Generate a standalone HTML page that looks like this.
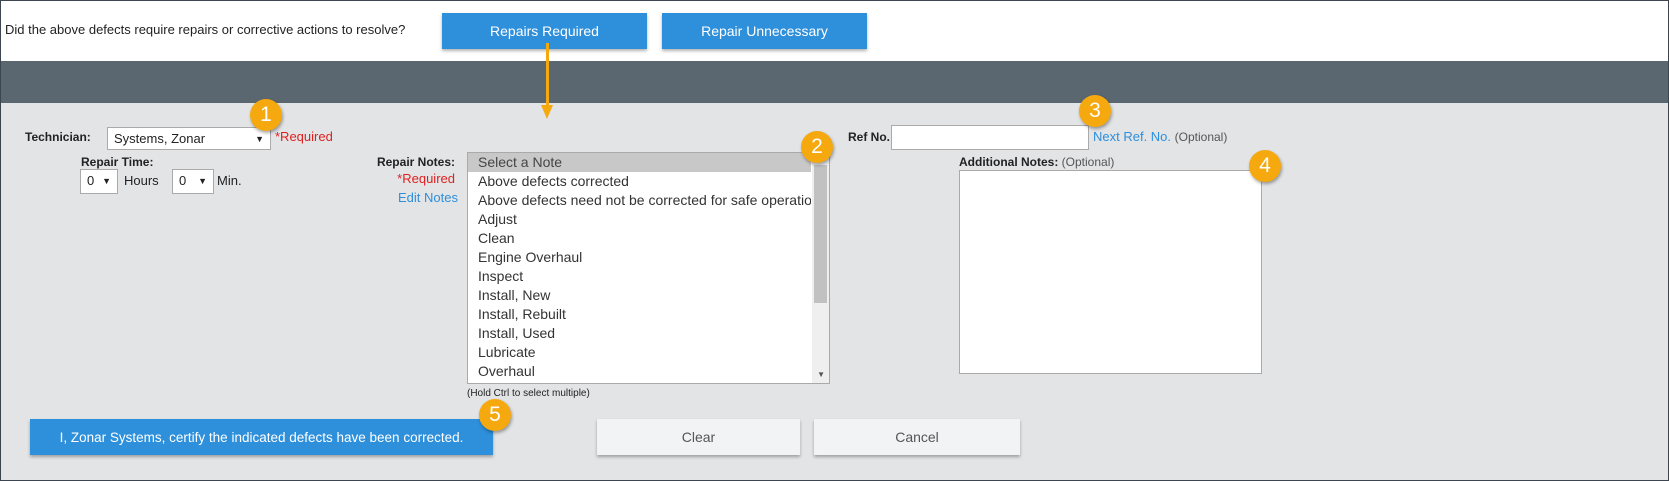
<!DOCTYPE html>
<html><head><style>
*{box-sizing:border-box;margin:0;padding:0}
body{width:1669px;height:481px;position:relative;overflow:hidden;font-family:"Liberation Sans",sans-serif;color:#222;background:#fff}
.a{position:absolute;white-space:nowrap}
.btn{position:absolute;display:flex;align-items:center;justify-content:center;font-size:14px;box-shadow:0 2px 3px rgba(0,0,0,.3)}
.blue{background:#2e8fdb;color:#fff}
.gray{background:#f2f3f5;color:#555}
.badge{position:absolute;width:32px;height:32px;border-radius:50%;background:#f5a90f;color:#fff;font-size:21px;display:flex;align-items:center;justify-content:center;box-shadow:1px 2px 3px rgba(0,0,0,.35)}
.b{font-weight:bold;font-size:12px}
.sel{position:absolute;background:#fff;border:1px solid #aaa;font-size:13px;padding-left:6px;line-height:22px}
.sel:after{content:"▼";position:absolute;right:6px;top:0;font-size:9px}
.li{height:19px;line-height:19px;padding-left:10px;font-size:14px;color:#333}
</style></head><body>
<div class="a" style="left:0;top:0;width:1669px;height:481px;border:1px solid #3d4650;"></div>
<div class="a" style="left:1px;top:61px;width:1667px;height:42px;background:#5a6670"></div>
<div class="a" style="left:1px;top:103px;width:1667px;height:377px;background:#e3e4e6"></div>
<div class="a" style="left:5px;top:22px;font-size:13px">Did the above defects require repairs or corrective actions to resolve?</div>
<div class="btn blue" style="left:442px;top:13px;width:205px;height:36px">Repairs Required</div>
<div class="btn blue" style="left:662px;top:13px;width:205px;height:36px">Repair Unnecessary</div>
<div class="a" style="left:546px;top:43px;width:3px;height:64px;background:#f5a90f"></div>
<div class="a" style="left:541px;top:105px;width:0;height:0;border-left:6px solid transparent;border-right:6px solid transparent;border-top:14px solid #f5a90f"></div>

<div class="a b" style="left:25px;top:130px">Technician:</div>
<div class="sel" style="left:107px;top:127px;width:164px;height:23px">Systems, Zonar</div>
<div class="a" style="left:275px;top:129px;font-size:13px;color:#e02020">*Required</div>
<div class="badge" style="left:250px;top:99px">1</div>

<div class="a b" style="left:81px;top:155px">Repair Time:</div>
<div class="sel" style="left:80px;top:169px;width:38px;height:25px">0</div>
<div class="a" style="left:124px;top:173px;font-size:13px">Hours</div>
<div class="sel" style="left:172px;top:169px;width:42px;height:25px">0</div>
<div class="a" style="left:217px;top:173px;font-size:13px">Min.</div>

<div class="a b" style="left:364px;top:155px;width:91px;text-align:right">Repair Notes:</div>
<div class="a" style="left:364px;top:171px;width:91px;text-align:right;font-size:13px;color:#e02020">*Required</div>
<div class="a" style="left:364px;top:190px;width:94px;text-align:right;font-size:13px;color:#2e8fdb">Edit Notes</div>

<div class="a" style="left:467px;top:152px;width:363px;height:232px;background:#fff;border:1px solid #aaa;overflow:hidden">
<div style="position:absolute;right:0;top:0;width:17px;height:230px;background:#efefef"></div>
<div style="position:absolute;right:2px;top:12px;width:13px;height:138px;background:#c1c1c1"></div>
<div style="position:absolute;right:4px;top:217px;font-size:8px;color:#555">▼</div>
<div style="position:absolute;right:4px;top:-1px;font-size:8px;color:#999">▲</div>
<div style="width:343px">
<div class="li" style="background:#c8c8c8;color:#444">Select a Note</div>
<div class="li">Above defects corrected</div>
<div class="li" style="overflow:hidden">Above defects need not be corrected for safe operation</div>
<div class="li">Adjust</div><div class="li">Clean</div><div class="li">Engine Overhaul</div><div class="li">Inspect</div><div class="li">Install, New</div><div class="li">Install, Rebuilt</div><div class="li">Install, Used</div><div class="li">Lubricate</div><div class="li">Overhaul</div>
</div></div>
<div class="badge" style="left:801px;top:131px">2</div>
<div class="a" style="left:467px;top:388px;font-size:10px">(Hold Ctrl to select multiple)</div>

<div class="a b" style="left:848px;top:130px">Ref No.</div>
<div class="a" style="left:891px;top:125px;width:198px;height:25px;background:#fff;border:1px solid #aaa"></div>
<div class="a" style="left:1093px;top:129px;font-size:13px;color:#2e8fdb">Next Ref. No. <span style="color:#555;font-size:12px">(Optional)</span></div>
<div class="badge" style="left:1079px;top:95px">3</div>

<div class="a" style="left:959px;top:155px;font-size:12px"><b>Additional Notes:</b> <span style="color:#555;font-size:12px">(Optional)</span></div>
<div class="a" style="left:959px;top:170px;width:303px;height:204px;background:#fff;border:1px solid #aaa"></div>
<div class="badge" style="left:1249px;top:150px">4</div>

<div class="btn blue" style="left:30px;top:419px;width:463px;height:36px;font-size:13.5px">I, Zonar Systems, certify the indicated defects have been corrected.</div>
<div class="badge" style="left:479px;top:399px">5</div>
<div class="btn gray" style="left:597px;top:419px;width:203px;height:36px">Clear</div>
<div class="btn gray" style="left:814px;top:419px;width:206px;height:36px">Cancel</div>
</body></html>
